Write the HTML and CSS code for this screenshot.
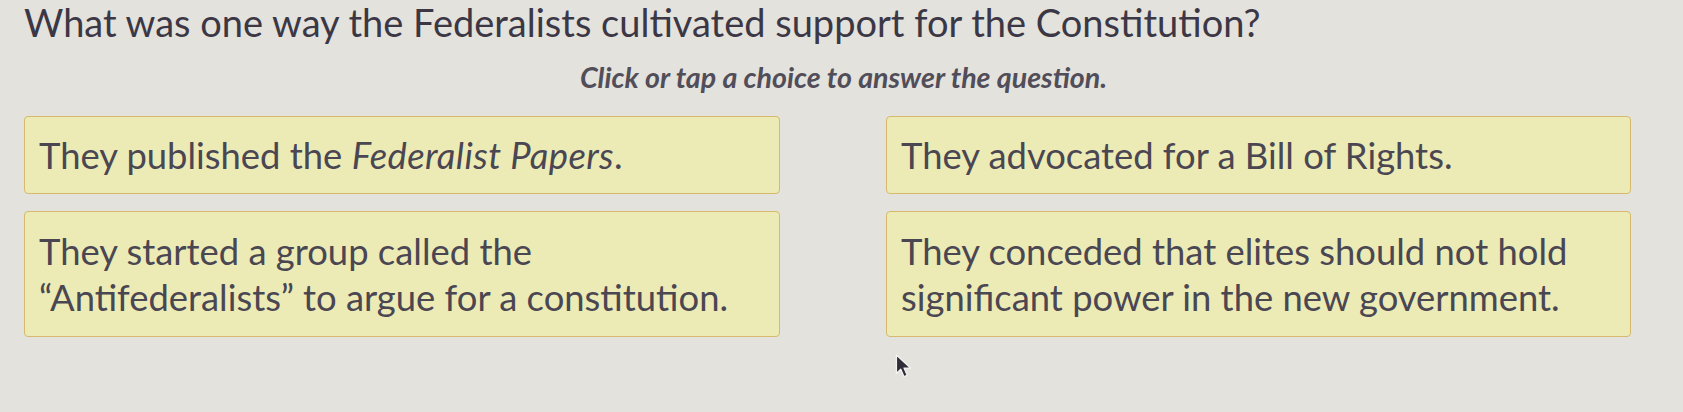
FILE: index.html
```html
<!DOCTYPE html>
<html lang="en">
<head>
<meta charset="utf-8">
<title>Question</title>
<link rel="stylesheet" href="styles.css">
</head>
<body>
<main class="page">
  <h1 class="question">What was one way the Federalists cultivated support for the Constitution?</h1>
  <p class="prompt">Click or tap a choice to answer the question.</p>
  <div class="choices">
    <button class="choice"><span>They published the <em>Federalist Papers</em>.</span></button>
    <button class="choice"><span>They advocated for a Bill of Rights.</span></button>
    <button class="choice"><span>They started a group called the<br>“Antifederalists” to argue for a constitution.</span></button>
    <button class="choice"><span>They conceded that elites should not hold<br>significant power in the new government.</span></button>
  </div>
  <svg class="cursor" width="20" height="26" viewBox="0 0 18 24" aria-hidden="true">
    <path d="M2 1 L2 18 L6 14 L9 21 L12 19.5 L9 13 L15 13 Z" fill="#2f2d3a" stroke="#f4f3f0" stroke-width="1.2" stroke-linejoin="round"/>
  </svg>
</main>
</body>
</html>
```
FILE: styles.css
```css
html, body {
  margin: 0;
  padding: 0;
  background: #e3e2dd;
}
body {
  font-family: "Lato", "Open Sans", sans-serif;
  color: #3f3b49;
}
.page {
  position: relative;
  width: 1683px;
  height: 412px;
  box-sizing: border-box;
  padding: 0 0 0 24px;
  overflow: hidden;
}
.question {
  margin: 0;
  font-size: 38px;
  font-weight: 400;
  line-height: 44px;
  color: #3b3745;
}
.prompt {
  margin: 17px 0 0 0;
  padding-right: 20px;
  text-align: center;
  font-size: 28.6px;
  font-weight: 700;
  font-style: italic;
  line-height: 32px;
  color: #514d59;
}
.choices {
  display: grid;
  grid-template-columns: 756px 745px;
  grid-template-rows: 78px 126px;
  column-gap: 106px;
  row-gap: 17px;
  margin-top: 23px;
}
.choice {
  display: flex;
  align-items: center;
  text-align: left;
  margin: 0;
  padding: 0 14px;
  background: #ecebb6;
  border: 1.5px solid #d6b96c;
  border-radius: 4px;
  font-family: inherit;
  font-size: 36.4px;
  line-height: 46px;
  color: #4a4652;
}
.choice em {
  font-style: italic;
  letter-spacing: 0.4px;
}
.cursor {
  position: absolute;
  left: 894px;
  top: 354px;
}
```
